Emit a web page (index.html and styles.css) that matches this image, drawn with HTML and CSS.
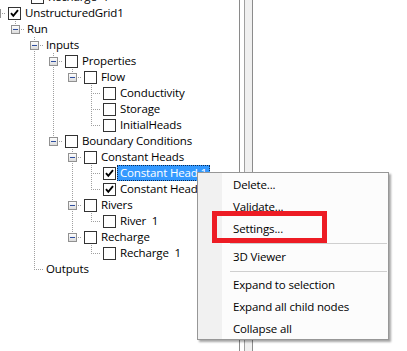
FILE: index.html
```html
<!DOCTYPE html>
<html lang="en">
<head>
  <meta charset="UTF-8" />
  <title>Model explorer</title>
  <link rel="stylesheet" href="styles.css">
</head>
<body>
  <div class="window">
    <div class="tree-pane">
      <div class="tree">
        <div class="row row-cut">
          <span class="pad-cut"></span>
          <span class="cb"></span>
          <span class="lbl">Recharge &nbsp;1</span>
        </div>
        <div class="row">
          <span class="g g-tee"><span class="exp"></span></span>
          <span class="cb on"><svg width="11" height="11" viewBox="0 0 11 11"><path d="M2 5.2l2.3 2.6L9 2.2" /></svg></span>
          <span class="lbl">UnstructuredGrid1</span>
        </div>
        <div class="row">
          <span class="g"></span>
          <span class="g g-end"><span class="exp"></span></span>
          <span class="lbl bare">Run</span>
        </div>
        <div class="row">
          <span class="g"></span><span class="g"></span>
          <span class="g g-tee"><span class="exp"></span></span>
          <span class="lbl bare">Inputs</span>
        </div>
        <div class="row">
          <span class="g"></span><span class="g"></span><span class="g g-line"></span>
          <span class="g g-tee"><span class="exp"></span></span>
          <span class="cb"></span>
          <span class="lbl">Properties</span>
        </div>
        <div class="row">
          <span class="g"></span><span class="g"></span><span class="g g-line"></span><span class="g g-line"></span>
          <span class="g g-end"><span class="exp"></span></span>
          <span class="cb"></span>
          <span class="lbl">Flow</span>
        </div>
        <div class="row">
          <span class="g"></span><span class="g"></span><span class="g g-line"></span><span class="g g-line"></span><span class="g"></span>
          <span class="g g-tee"></span>
          <span class="cb"></span>
          <span class="lbl">Conductivity</span>
        </div>
        <div class="row">
          <span class="g"></span><span class="g"></span><span class="g g-line"></span><span class="g g-line"></span><span class="g"></span>
          <span class="g g-tee"></span>
          <span class="cb"></span>
          <span class="lbl">Storage</span>
        </div>
        <div class="row">
          <span class="g"></span><span class="g"></span><span class="g g-line"></span><span class="g g-line"></span><span class="g"></span>
          <span class="g g-end"></span>
          <span class="cb"></span>
          <span class="lbl">InitialHeads</span>
        </div>
        <div class="row">
          <span class="g"></span><span class="g"></span><span class="g g-line"></span>
          <span class="g g-end"><span class="exp"></span></span>
          <span class="cb"></span>
          <span class="lbl">Boundary Conditions</span>
        </div>
        <div class="row">
          <span class="g"></span><span class="g"></span><span class="g g-line"></span><span class="g"></span>
          <span class="g g-tee"><span class="exp"></span></span>
          <span class="cb"></span>
          <span class="lbl">Constant Heads</span>
        </div>
        <div class="row">
          <span class="g"></span><span class="g"></span><span class="g g-line"></span><span class="g"></span><span class="g g-line"></span>
          <span class="g g-tee"></span>
          <span class="cb on"><svg width="11" height="11" viewBox="0 0 11 11"><path d="M2 5.2l2.3 2.6L9 2.2" /></svg></span>
          <span class="lbl selected">Constant Head 1</span>
        </div>
        <div class="row">
          <span class="g"></span><span class="g"></span><span class="g g-line"></span><span class="g"></span><span class="g g-line"></span>
          <span class="g g-end"></span>
          <span class="cb on"><svg width="11" height="11" viewBox="0 0 11 11"><path d="M2 5.2l2.3 2.6L9 2.2" /></svg></span>
          <span class="lbl">Constant Head 1</span>
        </div>
        <div class="row">
          <span class="g"></span><span class="g"></span><span class="g g-line"></span><span class="g"></span>
          <span class="g g-tee"><span class="exp"></span></span>
          <span class="cb"></span>
          <span class="lbl">Rivers</span>
        </div>
        <div class="row">
          <span class="g"></span><span class="g"></span><span class="g g-line"></span><span class="g"></span><span class="g g-line"></span>
          <span class="g g-end"></span>
          <span class="cb"></span>
          <span class="lbl">River &nbsp;1</span>
        </div>
        <div class="row">
          <span class="g"></span><span class="g"></span><span class="g g-line"></span><span class="g"></span>
          <span class="g g-end"><span class="exp"></span></span>
          <span class="cb"></span>
          <span class="lbl">Recharge</span>
        </div>
        <div class="row">
          <span class="g"></span><span class="g"></span><span class="g g-line"></span><span class="g"></span><span class="g"></span>
          <span class="g g-end"></span>
          <span class="cb"></span>
          <span class="lbl">Recharge &nbsp;1</span>
        </div>
        <div class="row">
          <span class="g"></span><span class="g"></span>
          <span class="g g-end"></span>
          <span class="lbl bare">Outputs</span>
        </div>
      </div>
    </div>
    <div class="gap"></div>
    <div class="splitter"></div>
    <div class="view-pane"></div>
  </div>

  <div class="menu">
    <div class="item">Delete...</div>
    <div class="item">Validate...</div>
    <div class="item">Settings...</div>
    <div class="sep"></div>
    <div class="item">3D Viewer</div>
    <div class="sep"></div>
    <div class="item">Expand to selection</div>
    <div class="item">Expand all child nodes</div>
    <div class="item">Collapse all</div>
  </div>

  <div class="mark"></div>
</body>
</html>
```

FILE: styles.css
```css
:root {
  --line: #a0a0a0;
  --dot-v: repeating-linear-gradient(to bottom, var(--line) 0 1px, transparent 1px 2px);
  --dot-h: repeating-linear-gradient(to right, var(--line) 0 1px, transparent 1px 2px);
  --select: #3399ff;
  --mark: #ed1c24;
}

* {
  box-sizing: border-box;
  margin: 0;
  padding: 0;
}

body {
  width: 407px;
  height: 351px;
  overflow: hidden;
  background: #fff;
  color: #000;
  font-family: "Open Sans", "Noto Sans", sans-serif;
  font-size: 11.5px;
  letter-spacing: -0.15px;
  position: relative;
}

.window {
  display: flex;
  height: 100%;
}

/* tree view */

.tree-pane {
  width: 240px;
  flex: none;
  overflow: hidden;
  border-right: 1px solid #8a8a8a;
}

.tree {
  margin: -11px 0 0 -13px;
}

.row {
  display: flex;
  align-items: center;
  height: 16px;
  white-space: nowrap;
}

.g {
  flex: none;
  width: 19px;
  height: 16px;
  display: flex;
  align-items: center;
}

.g-line {
  background: var(--dot-v) 9px 0 / 1px 16px no-repeat;
}

.g-tee {
  background: var(--dot-h) 9px 8px / 10px 1px no-repeat,
              var(--dot-v) 9px 0 / 1px 16px no-repeat;
}

.g-end {
  background: var(--dot-h) 9px 8px / 10px 1px no-repeat,
              var(--dot-v) 9px 0 / 1px 9px no-repeat;
}

.exp {
  width: 9px;
  height: 9px;
  margin: 1px 0 0 5px;
  border: 1px solid #919191;
  background: linear-gradient(#2f4f9f, #2f4f9f) center / 5px 1px no-repeat,
              linear-gradient(#fdfdfd, #dcdcdc);
}

.cb {
  flex: none;
  width: 13px;
  height: 13px;
  margin-left: 2px;
  border: 1px solid #333;
  background: #fff;
  display: flex;
  align-items: center;
  justify-content: center;
}

.cb svg path {
  fill: none;
  stroke: #000;
  stroke-width: 1.9;
}

.lbl {
  height: 16px;
  line-height: 14px;
  margin-left: 1px;
  padding: 0 2px;
  border: 1px solid transparent;
}

.lbl.bare {
  margin-left: -1px;
}

.lbl.selected {
  background: var(--select);
  color: #fff;
  border: 1px dotted #0b2a55;
}

.row-cut .pad-cut {
  width: 42px;
  flex: none;
}

/* splitter between panes */

.gap {
  width: 4px;
  flex: none;
}

.splitter {
  width: 9px;
  flex: none;
  background: #f0f0f0;
  border-left: 1px solid #a0a0a0;
  border-right: 1px solid #8c8c8c;
}

.view-pane {
  flex: 1;
}

/* context menu */

.menu {
  position: absolute;
  left: 197px;
  top: 172px;
  width: 192px;
  height: 168px;
  padding-top: 1px;
  border: 1px solid #979797;
  background: linear-gradient(to right, #f1f1f1 0 24px, #fcfcfc 24px);
  box-shadow: 2px 2px 2px rgba(0, 0, 0, 0.35);
}

.item {
  height: 22px;
  line-height: 22px;
  padding-left: 35px;
  white-space: nowrap;
}

.sep {
  height: 6px;
  margin: 0 1px 0 32px;
  background: linear-gradient(#cfcfcf, #cfcfcf) 0 3px / 100% 1px no-repeat;
}

/* red annotation */

.mark {
  position: absolute;
  left: 212px;
  top: 211px;
  width: 115px;
  height: 32px;
  border: 5px solid var(--mark);
}
```
